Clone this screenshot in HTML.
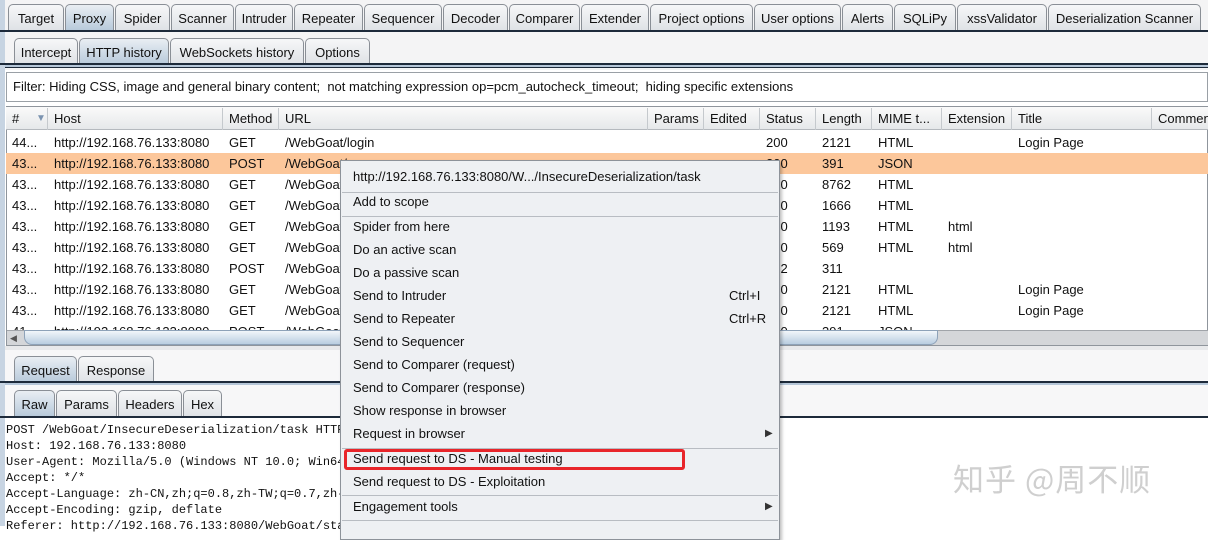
<!DOCTYPE html>
<html><head><meta charset="utf-8"><style>
*{margin:0;padding:0;box-sizing:border-box}
body{width:1208px;height:526px;overflow:hidden;background:#fff;font-family:"Liberation Sans",sans-serif;font-size:13px;color:#111;position:relative}
.a{position:absolute;white-space:nowrap}
.tab{position:absolute;height:26px;border:1px solid #8a8f96;border-bottom:none;border-radius:5px 5px 0 0;background:linear-gradient(#f6f7f8,#dfe2e6);padding:6px 0 0;text-align:center;font-size:13px}
.sel{background:linear-gradient(#e9eef3,#b8cadb)}
.line{position:absolute;left:0;width:1208px;height:2px;background:#1d2a3a}
.row{position:absolute;left:6px;width:1202px;height:21px}
.row span{position:absolute;top:3px}
.hd span{position:absolute;top:4px}
.mi{position:absolute;left:12px;font-size:13px}
.sep{position:absolute;left:1px;right:1px;height:1px;background:#b8bcc2}
.mono{font-family:"Liberation Mono",monospace;font-size:12px;position:absolute;left:6px;white-space:nowrap}
</style></head><body>
<div class="a" style="left:0;top:0;width:5px;height:526px;background:#c7d4e2"></div>
<div class="a" style="left:5px;top:0;width:1203px;height:70px;background:#f4f4f5"></div>
<div class="tab" style="left:8px;top:4px;width:56px">Target</div>
<div class="tab sel" style="left:65px;top:4px;width:49px">Proxy</div>
<div class="tab" style="left:115px;top:4px;width:55px">Spider</div>
<div class="tab" style="left:171px;top:4px;width:63px">Scanner</div>
<div class="tab" style="left:235px;top:4px;width:58px">Intruder</div>
<div class="tab" style="left:294px;top:4px;width:69px">Repeater</div>
<div class="tab" style="left:364px;top:4px;width:78px">Sequencer</div>
<div class="tab" style="left:443px;top:4px;width:65px">Decoder</div>
<div class="tab" style="left:509px;top:4px;width:71px">Comparer</div>
<div class="tab" style="left:581px;top:4px;width:68px">Extender</div>
<div class="tab" style="left:650px;top:4px;width:103px">Project options</div>
<div class="tab" style="left:754px;top:4px;width:87px">User options</div>
<div class="tab" style="left:842px;top:4px;width:51px">Alerts</div>
<div class="tab" style="left:894px;top:4px;width:62px">SQLiPy</div>
<div class="tab" style="left:957px;top:4px;width:90px">xssValidator</div>
<div class="tab" style="left:1048px;top:4px;width:153px">Deserialization Scanner</div>
<div class="line" style="top:30px"></div>
<div class="tab" style="left:14px;top:38px;width:64px">Intercept</div>
<div class="tab sel" style="left:79px;top:38px;width:90px">HTTP history</div>
<div class="tab" style="left:170px;top:38px;width:134px">WebSockets history</div>
<div class="tab" style="left:305px;top:38px;width:65px">Options</div>
<div class="line" style="top:63px"></div>
<div class="a" style="left:5px;top:65px;width:1203px;height:2px;background:#b5c6d8"></div>
<div class="a" style="left:5px;top:67px;width:1203px;height:1px;background:#1d2a3a"></div>
<div class="a" style="left:6px;top:72px;width:1202px;height:30px;border:1px solid #9aa0a6;background:#fff;padding:6px 0 0 6px">Filter: Hiding CSS, image and general binary content;&nbsp; not matching expression op=pcm_autocheck_timeout;&nbsp; hiding specific extensions</div>
<div class="a" style="left:6px;top:106px;width:1202px;height:240px;border:1px solid #8f959c;background:#fff"></div>
<div class="row hd" style="top:107px;height:23px;background:linear-gradient(#fafafa,#e6e8ea);border-bottom:1px solid #b5b9be">
<span style="left:6px">#</span><span style="left:30px;color:#7b93b0;font-size:10px;top:6px">▼</span>
<span style="left:48px">Host</span><span style="left:223px">Method</span><span style="left:279px">URL</span><span style="left:648px">Params</span><span style="left:704px">Edited</span><span style="left:760px">Status</span><span style="left:816px">Length</span><span style="left:872px">MIME t...</span><span style="left:942px">Extension</span><span style="left:1012px">Title</span><span style="left:1152px">Commen</span>
</div>
<div class="a" style="left:47px;top:108px;width:1px;height:22px;background:#c5c9cd"></div>
<div class="a" style="left:222px;top:108px;width:1px;height:22px;background:#c5c9cd"></div>
<div class="a" style="left:278px;top:108px;width:1px;height:22px;background:#c5c9cd"></div>
<div class="a" style="left:647px;top:108px;width:1px;height:22px;background:#c5c9cd"></div>
<div class="a" style="left:703px;top:108px;width:1px;height:22px;background:#c5c9cd"></div>
<div class="a" style="left:759px;top:108px;width:1px;height:22px;background:#c5c9cd"></div>
<div class="a" style="left:815px;top:108px;width:1px;height:22px;background:#c5c9cd"></div>
<div class="a" style="left:871px;top:108px;width:1px;height:22px;background:#c5c9cd"></div>
<div class="a" style="left:941px;top:108px;width:1px;height:22px;background:#c5c9cd"></div>
<div class="a" style="left:1011px;top:108px;width:1px;height:22px;background:#c5c9cd"></div>
<div class="a" style="left:1151px;top:108px;width:1px;height:22px;background:#c5c9cd"></div>
<div class="row" style="top:132px"><span style="left:6px">44...</span><span style="left:48px">http://192.168.76.133:8080</span><span style="left:223px">GET</span><span style="left:279px">/WebGoat/login</span><span style="left:760px">200</span><span style="left:816px">2121</span><span style="left:872px">HTML</span><span style="left:1012px">Login Page</span></div>
<div class="row" style="top:153px;background:#fcc79b"><span style="left:6px">43...</span><span style="left:48px">http://192.168.76.133:8080</span><span style="left:223px">POST</span><span style="left:279px">/WebGoat/</span><span style="left:760px">200</span><span style="left:816px">391</span><span style="left:872px">JSON</span></div>
<div class="row" style="top:174px"><span style="left:6px">43...</span><span style="left:48px">http://192.168.76.133:8080</span><span style="left:223px">GET</span><span style="left:279px">/WebGoat</span><span style="left:760px">200</span><span style="left:816px">8762</span><span style="left:872px">HTML</span></div>
<div class="row" style="top:195px"><span style="left:6px">43...</span><span style="left:48px">http://192.168.76.133:8080</span><span style="left:223px">GET</span><span style="left:279px">/WebGoat</span><span style="left:760px">200</span><span style="left:816px">1666</span><span style="left:872px">HTML</span></div>
<div class="row" style="top:216px"><span style="left:6px">43...</span><span style="left:48px">http://192.168.76.133:8080</span><span style="left:223px">GET</span><span style="left:279px">/WebGoat</span><span style="left:760px">200</span><span style="left:816px">1193</span><span style="left:872px">HTML</span><span style="left:942px">html</span></div>
<div class="row" style="top:237px"><span style="left:6px">43...</span><span style="left:48px">http://192.168.76.133:8080</span><span style="left:223px">GET</span><span style="left:279px">/WebGoat</span><span style="left:760px">200</span><span style="left:816px">569</span><span style="left:872px">HTML</span><span style="left:942px">html</span></div>
<div class="row" style="top:258px"><span style="left:6px">43...</span><span style="left:48px">http://192.168.76.133:8080</span><span style="left:223px">POST</span><span style="left:279px">/WebGoat</span><span style="left:760px">302</span><span style="left:816px">311</span></div>
<div class="row" style="top:279px"><span style="left:6px">43...</span><span style="left:48px">http://192.168.76.133:8080</span><span style="left:223px">GET</span><span style="left:279px">/WebGoat</span><span style="left:760px">200</span><span style="left:816px">2121</span><span style="left:872px">HTML</span><span style="left:1012px">Login Page</span></div>
<div class="row" style="top:300px"><span style="left:6px">43...</span><span style="left:48px">http://192.168.76.133:8080</span><span style="left:223px">GET</span><span style="left:279px">/WebGoat</span><span style="left:760px">200</span><span style="left:816px">2121</span><span style="left:872px">HTML</span><span style="left:1012px">Login Page</span></div>
<div class="row" style="top:321px;height:9px;overflow:hidden"><span style="left:6px">41...</span><span style="left:48px">http://192.168.76.133:8080</span><span style="left:223px">POST</span><span style="left:279px">/WebGoat</span><span style="left:760px">200</span><span style="left:816px">391</span><span style="left:872px">JSON</span></div>
<div class="a" style="left:7px;top:330px;width:1201px;height:15px;background:#d4d6d9;border-top:1px solid #a0a4a9"></div>
<div class="a" style="left:10px;top:333px;font-size:9px;color:#555">◀</div>
<div class="a" style="left:24px;top:330px;width:914px;height:15px;background:linear-gradient(#f2f6fa,#b9cde0);border:1px solid #8ea2b8;border-radius:0 0 8px 8px"></div>
<div class="a" style="left:5px;top:346px;width:1203px;height:4px;background:#e8e9eb"></div>
<div class="a" style="left:5px;top:350px;width:1203px;height:66px;background:#f7f7f8"></div>
<div class="tab sel" style="left:14px;top:356px;width:63px">Request</div>
<div class="tab" style="left:78px;top:356px;width:76px">Response</div>
<div class="line" style="top:381px"></div>
<div class="a" style="left:5px;top:383px;width:1203px;height:2px;background:#b5c6d8"></div>
<div class="tab sel" style="left:14px;top:390px;width:41px">Raw</div>
<div class="tab" style="left:56px;top:390px;width:61px">Params</div>
<div class="tab" style="left:118px;top:390px;width:64px">Headers</div>
<div class="tab" style="left:183px;top:390px;width:39px">Hex</div>
<div class="line" style="top:416px"></div>
<div class="mono" style="top:423px">POST /WebGoat/InsecureDeserialization/task HTTP/1.1</div>
<div class="mono" style="top:439px">Host: 192.168.76.133:8080</div>
<div class="mono" style="top:455px">User-Agent: Mozilla/5.0 (Windows NT 10.0; Win64; x64)</div>
<div class="mono" style="top:471px">Accept: */*</div>
<div class="mono" style="top:487px">Accept-Language: zh-CN,zh;q=0.8,zh-TW;q=0.7,zh-HK;q=0.5</div>
<div class="mono" style="top:503px">Accept-Encoding: gzip, deflate</div>
<div class="mono" style="top:519px">Referer: http://192.168.76.133:8080/WebGoat/start.mvc</div>
<div class="a" style="left:953px;top:455px;font-family:'Noto Sans CJK SC',sans-serif;font-size:31px;color:#cfcfcf;letter-spacing:1px">知乎 @周不顺</div>
<div class="a" style="left:340px;top:160px;width:440px;height:380px;background:#eef0f3;border:1px solid #8d9299;box-shadow:2px 2px 3px rgba(0,0,0,.25)">
<div class="mi" style="top:8px">http://192.168.76.133:8080/W.../InsecureDeserialization/task</div>
<div class="sep" style="top:31px"></div>
<div class="mi" style="top:33px">Add to scope</div>
<div class="sep" style="top:55px"></div>
<div class="mi" style="top:58px">Spider from here</div>
<div class="mi" style="top:81px">Do an active scan</div>
<div class="mi" style="top:104px">Do a passive scan</div>
<div class="mi" style="top:127px">Send to Intruder</div><div class="a" style="left:388px;top:127px">Ctrl+I</div>
<div class="mi" style="top:150px">Send to Repeater</div><div class="a" style="left:388px;top:150px">Ctrl+R</div>
<div class="mi" style="top:173px">Send to Sequencer</div>
<div class="mi" style="top:196px">Send to Comparer (request)</div>
<div class="mi" style="top:219px">Send to Comparer (response)</div>
<div class="mi" style="top:242px">Show response in browser</div>
<div class="mi" style="top:265px">Request in browser</div><div class="a" style="left:424px;top:267px;font-size:10px;color:#333">▶</div>
<div class="sep" style="top:287px"></div>
<div class="mi" style="top:290px">Send request to DS - Manual testing</div>
<div class="a" style="left:3px;top:288px;width:341px;height:21px;border:3px solid #e8252a;border-radius:3px"></div>
<div class="mi" style="top:313px">Send request to DS - Exploitation</div>
<div class="sep" style="top:334px"></div>
<div class="mi" style="top:338px">Engagement tools</div><div class="a" style="left:424px;top:340px;font-size:10px;color:#333">▶</div>
<div class="sep" style="top:359px"></div>
</div>
</body></html>
